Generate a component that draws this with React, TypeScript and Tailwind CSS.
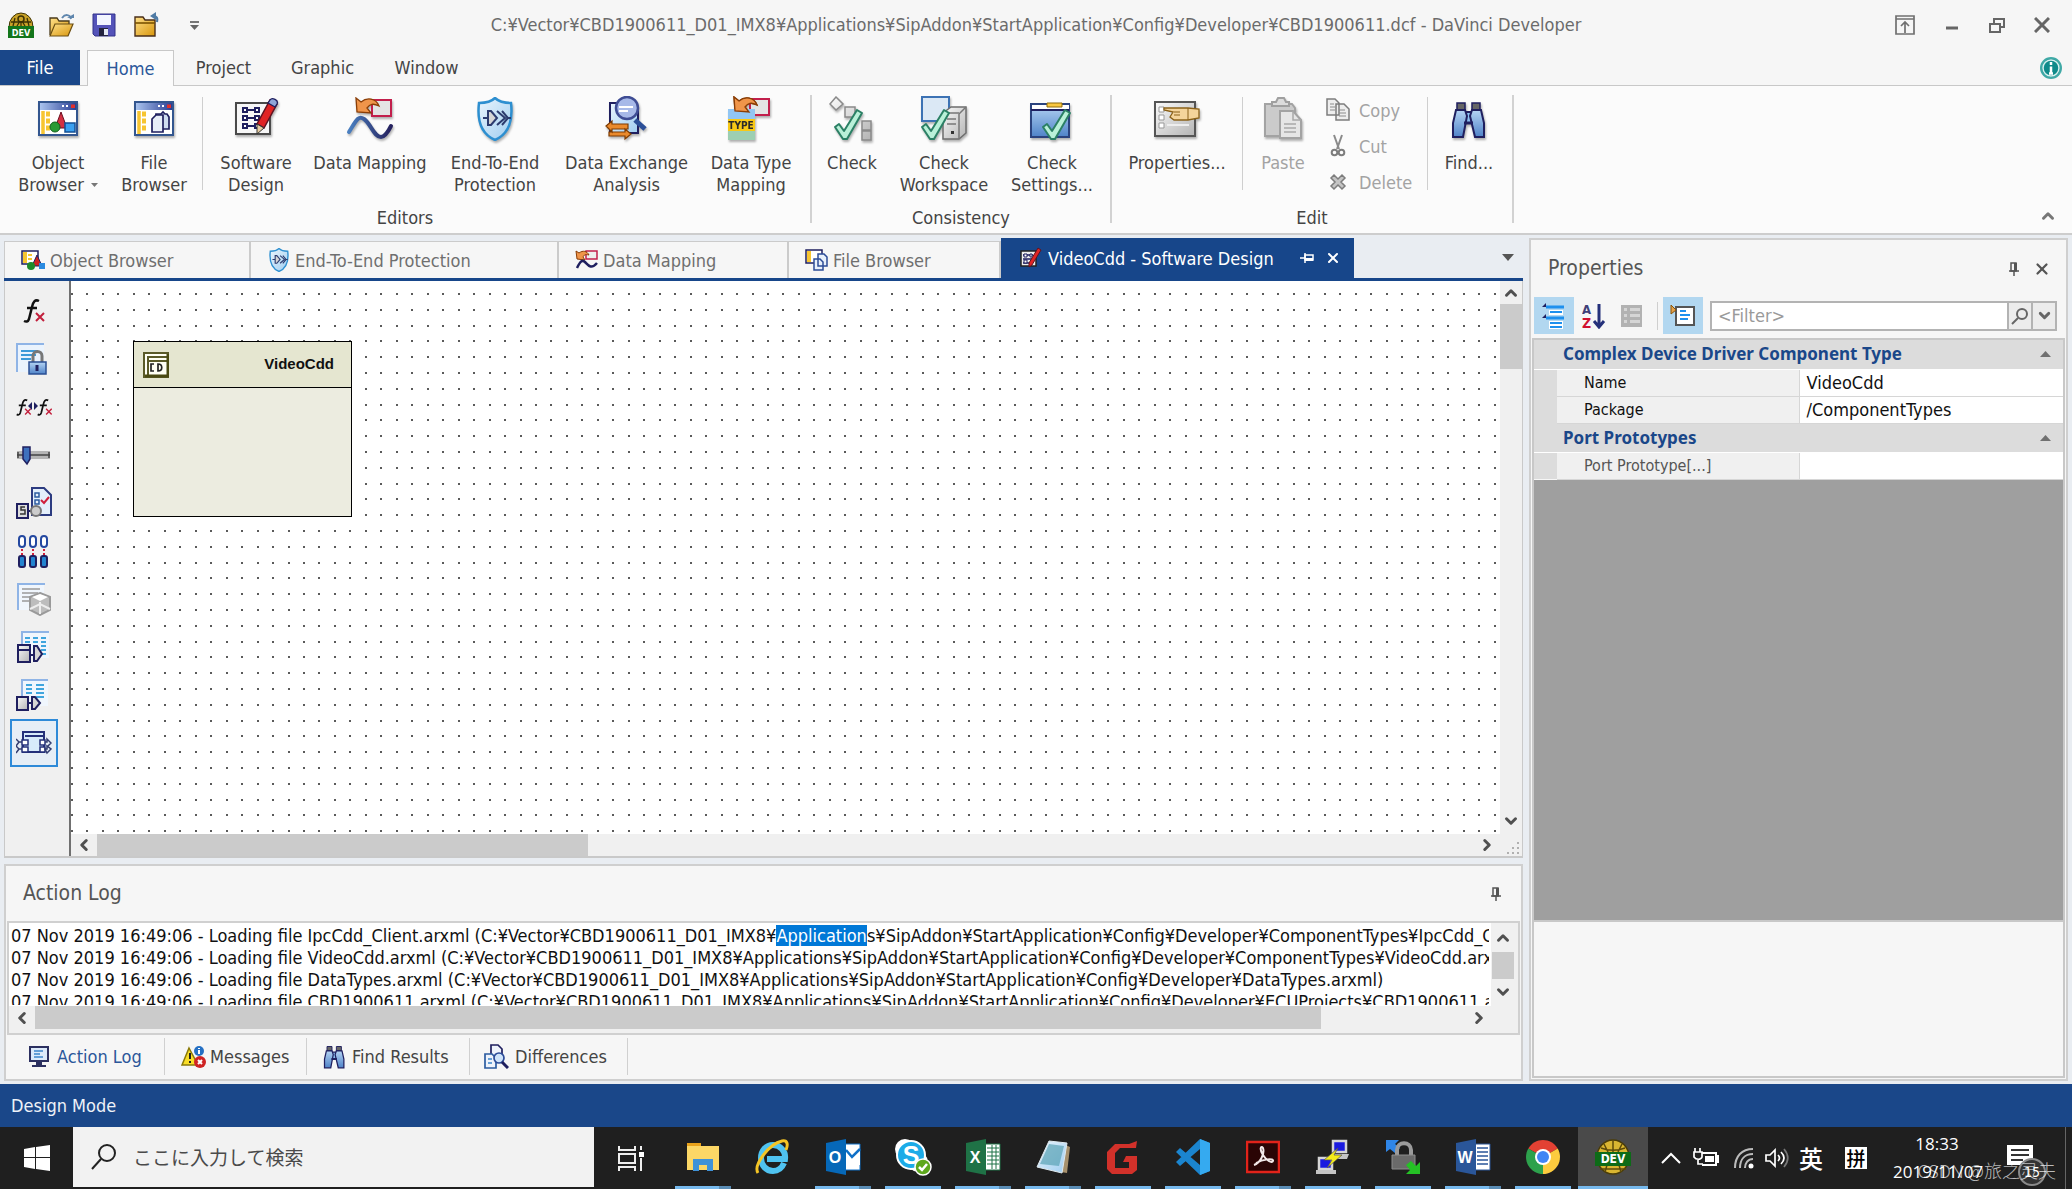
import type { ReactNode } from 'react'
import { ChevronDown, ChevronLeft, ChevronRight, ChevronUp, X } from 'lucide-react'
import clsx from 'clsx'

const NAVY = '#1f1f5f'

interface DrawingProps {
  w: number
  h: number
  box?: string
  children: ReactNode
}

function Drawing({ w, h, box, children }: DrawingProps) {
  return (
    <svg width={w} height={h} viewBox={box ?? `0 0 ${w} ${h}`} fill="none" className="shrink-0" aria-hidden="true">
      {children}
    </svg>
  )
}

function Gradients() {
  return (
    <svg width="0" height="0" className="absolute" aria-hidden="true">
      <defs>
        <linearGradient id="gold" x1="0" y1="0" x2="1" y2="1">
          <stop offset="0" stopColor="#ffe08a" />
          <stop offset="1" stopColor="#d8960c" />
        </linearGradient>
        <linearGradient id="sky" x1="0" y1="0" x2="1" y2="1">
          <stop offset="0" stopColor="#eaf5fd" />
          <stop offset="1" stopColor="#9fcdf0" />
        </linearGradient>
        <linearGradient id="steel" x1="0" y1="0" x2="1" y2="1">
          <stop offset="0" stopColor="#fafafa" />
          <stop offset="1" stopColor="#b4b4b4" />
        </linearGradient>
        <linearGradient id="blue" x1="0" y1="0" x2="0" y2="1">
          <stop offset="0" stopColor="#b5d4f4" />
          <stop offset="1" stopColor="#4f83c8" />
        </linearGradient>
        <linearGradient id="bar" x1="0" y1="0" x2="1" y2="0">
          <stop offset="0" stopColor="#a9c3ee" />
          <stop offset="1" stopColor="#2b3f94" />
        </linearGradient>
        <linearGradient id="wave" x1="0" y1="0" x2="1" y2="0">
          <stop offset="0" stopColor="#4a7fc0" />
          <stop offset="1" stopColor="#25215e" />
        </linearGradient>
      </defs>
    </svg>
  )
}

/* ---------- quick access icons ---------- */

function DevLogo({ size = 26 }: { size?: number }) {
  return (
    <Drawing w={size} h={size} box="0 0 26 26">
      <path d="M1 15a12 14 0 0 1 24 0z" fill="#c9a227" stroke="#3d3205" />
      <circle cx="13" cy="7" r="3" stroke="#3d3205" strokeWidth="1.5" />
      <path d="M3 10h20M7 6l-2 8M19 6l2 8M9 14l3-5M17 14l-3-5M13 9v6" stroke="#3d3205" strokeWidth="1.3" />
      <rect y="14" width="26" height="12" fill="#13761b" />
      <text x="13" y="24" textAnchor="middle" fontFamily="DejaVu Sans Condensed" fontSize="9" fontWeight="700" fill="#fff">DEV</text>
    </Drawing>
  )
}

function OpenFolder() {
  return (
    <Drawing w={27} h={24}>
      <path d="M2 22V5h7l2 3h10v4" fill="url(#gold)" stroke="#4a3a1a" strokeWidth="1.3" />
      <path d="M2 23l5-12h18l-5 12z" fill="url(#gold)" stroke="#6b4e12" strokeWidth="1.2" />
      <path d="M14 5c3-4 8-4 9 1" stroke="#5f86ad" strokeWidth="2" />
      <path d="M19 5h7v-4z" fill="#5f86ad" />
    </Drawing>
  )
}

function SaveIcon() {
  return (
    <Drawing w={24} h={24}>
      <path d="M1 1h22v22H3l-2-2z" fill="#5453b9" stroke="#33338a" />
      <rect x="5" y="2" width="14" height="10" fill="#f2f5ff" />
      <rect x="7" y="15" width="9" height="8" fill="#23233f" />
      <rect x="12" y="16" width="4" height="6" fill="#e4e8f5" />
    </Drawing>
  )
}

function ProjectFolder() {
  return (
    <Drawing w={27} h={26}>
      <path d="M2 24V5h8l2 3h10v16z" fill="url(#gold)" stroke="#4a2f1a" strokeWidth="1.4" />
      <path d="M2 11h20" stroke="#7a5200" strokeWidth="1.6" />
      <path d="M20 4c4 0 5 2 4 6" stroke="#4f7ba5" strokeWidth="2.2" />
      <path d="M17 4l6-4v8z" fill="#4f7ba5" />
    </Drawing>
  )
}

/* ---------- ribbon icons ---------- */

function WindowFrame({ children }: { children: ReactNode }) {
  return (
    <Drawing w={44} h={44}>
      <rect x="3" y="5" width="38" height="33" fill="#fff" stroke="#33568f" strokeWidth="2" />
      <rect x="4" y="6" width="36" height="7" fill="url(#bar)" />
      <path d="M26 9h2M30 9h2" stroke="#fff" strokeWidth="2" />
      <path d="M35 7.5h4v3.500h-4z" fill="#e0302c" />
      <path d="M7 14v23" stroke="#f7c531" strokeWidth="3.500" />
      <path d="M10 17h4M10 24h4M10 31h4" stroke="#f7c531" strokeWidth="5" />
      {children}
    </Drawing>
  )
}

function ObjectBrowserIcon() {
  return (
    <WindowFrame>
      <path d="M25 15l6 16h-12z" fill="#d43142" stroke="#6b1020" />
      <circle cx="19" cy="30" r="5" fill="#2a9a35" stroke="#12601c" />
      <rect x="29" y="26" width="10" height="9" fill="#3aa0f0" stroke="#134f94" strokeWidth="1.5" />
    </WindowFrame>
  )
}

function FileBrowserIcon() {
  return (
    <WindowFrame>
      <path d="M24 20v-3h5l2-2 2 2h2l2 3v12h-6" fill="#cfdcf0" stroke={NAVY} strokeWidth="1.700" />
      <path d="M20 22l4-4h7v17H20z" fill="#e8eef8" stroke={NAVY} strokeWidth="1.700" />
    </WindowFrame>
  )
}

function SoftwareDesignIcon() {
  return (
    <Drawing w={46} h={44}>
      <path d="M3 6h34v31H3z" fill="#f7f7f7" stroke="#4a4a4a" strokeWidth="2" />
      <path d="M13 13h14M13 21h14M13 29h14" stroke={NAVY} strokeWidth="2" />
      <path d="M10 11h4v4h-4zM10 19h4v4h-4zM10 27h4v4h-4zM22 11h4v4h-4zM22 19h4v4h-4zM22 27h4v4h-4z" fill="#fff" stroke={NAVY} strokeWidth="2" />
      <path d="M37 3l7 4-13 24-7-4z" fill="#e02424" stroke="#5f1320" strokeWidth="1.5" />
      <path d="M37 3c2-3 9 0 7 4l-2 3-7-4z" fill="#8fa6d8" stroke={NAVY} strokeWidth="1.3" />
      <path d="M24 27l7 4-7 6z" fill="#e8cda0" stroke="#333" />
    </Drawing>
  )
}

function OrangeArrow() {
  return (
    <>
      <path d="M23 3h19v16H23z" fill="#e4e4e4" stroke="#c21f4c" strokeWidth="2" />
      <path d="M7 1l5 4c6-5 15-4 18 4-6-3-9-2-12 2l4 5-14-1z" fill="#f0954a" stroke="#8a3d05" strokeWidth="1.300" />
    </>
  )
}

function DataMappingIcon() {
  return (
    <Drawing w={48} h={44}>
      <g transform="translate(3 0)"><OrangeArrow /></g>
      <path d="M3 35C10 24 12 18 18 22c7 5 10 18 17 18 4 0 7-5 10-11" stroke="url(#wave)" strokeWidth="4" strokeLinecap="round" />
    </Drawing>
  )
}

function ShieldIcon({ size = 44 }: { size?: number }) {
  return (
    <Drawing w={size} h={size} box="0 0 44 44">
      <path d="M22 1c4 4 9 5 16 5 2 17-2 31-16 37C8 37 4 23 6 6c7 0 12-1 16-5z" fill="url(#sky)" stroke="#2d8fd0" strokeWidth="2.500" />
      <path d="M10 21h5M24 14l8 7-8 7M29 14l6 7-6 7M35 21h3" stroke="#2c3b6e" strokeWidth="2" />
      <path d="M15 14v14h3l6-7-6-7z" fill="#d5d5d5" stroke="#2c3b6e" strokeWidth="2" />
    </Drawing>
  )
}

function DataExchangeIcon() {
  return (
    <Drawing w={46} h={46}>
      <path d="M6 7h19l9 8v22H6z" fill="url(#sky)" stroke={NAVY} strokeWidth="2" />
      <path d="M31 24l10 9" stroke="#2b4f98" strokeWidth="5" />
      <circle cx="23" cy="12" r="11" fill="#a7b9e8" stroke="#3f4d94" strokeWidth="2.500" />
      <path d="M15 11h14M15 15h9" stroke="#fff" strokeWidth="2" />
      <path d="M2 30l6-5v3h16v5H8v3zM27 38l-6-5v3H5v4h16v3z" fill="#ea8a2c" stroke="#7d3b02" strokeWidth="1.200" />
    </Drawing>
  )
}

function DataTypeIcon() {
  return (
    <Drawing w={48} h={46}>
      <OrangeArrow />
      <path d="M1 13h27v11H1z" fill="#92c6f3" />
      <path d="M1 23h27v12H1z" fill="#f8c916" />
      <path d="M1 35h27v9H1z" fill="#9dcfb2" />
      <path d="M7 1l5 4c6-5 15-4 18 4-6-3-9-2-12 2l4 5-14-1z" fill="#f0954a" stroke="#8a3d05" strokeWidth="1.300" />
      <text x="14" y="33" textAnchor="middle" fontFamily="DejaVu Sans Condensed" fontSize="10" fontWeight="700" fill="#2b2b2b">TYPE</text>
    </Drawing>
  )
}

function Tick() {
  return <path d="M3 30l4-3 5 7L25 13l5 3L15 42h-4z" fill="#b9f0d8" stroke="#2b8065" strokeWidth="2" strokeLinejoin="round" />
}

function CheckIcon() {
  return (
    <Drawing w={46} h={46}>
      <path d="M7 1l7 7-7 6-6-6zM16 11h10v10H16zM33 25h9v9h-9zM33 35h9v9h-9z" fill="url(#steel)" stroke="#8a8a8a" strokeWidth="1.500" />
      <g transform="translate(3 1)"><Tick /></g>
    </Drawing>
  )
}

function CheckWorkspaceIcon() {
  return (
    <Drawing w={48} h={46}>
      <path d="M2 1h27v24H2z" fill="#dbe8f5" stroke="#3c72b4" strokeWidth="2" />
      <path d="M23 17l8-6h15v26l-7 6H23z" fill="url(#steel)" stroke="#6e6e6e" strokeWidth="1.500" />
      <path d="M39 18v25M39 18l7-7M23 17h16M27 23h9M27 28h9" stroke="#777" strokeWidth="1.500" />
      <path d="M31 35h3v3h-3z" fill="#333" />
      <g transform="translate(-1 1)"><Tick /></g>
    </Drawing>
  )
}

function CheckSettingsIcon() {
  return (
    <Drawing w={48} h={46}>
      <path d="M3 8h38v33H3z" fill="url(#blue)" stroke="#2b437e" strokeWidth="2" />
      <path d="M4 9h37v4H4z" fill="#fff" />
      <path d="M19 7h15v4H19z" fill="#f9c740" stroke="#8f6b08" />
      <path d="M3 14h38" stroke={NAVY} strokeWidth="2" />
      <g transform="translate(12 1)"><Tick /></g>
    </Drawing>
  )
}

function PropertiesIcon() {
  return (
    <Drawing w={46} h={44}>
      <path d="M1 5h40v34H1z" fill="url(#steel)" stroke="#555" strokeWidth="2" />
      <path d="M5 10h5v5H5zM5 18h5v5H5zM5 26h5v5H5z" fill="#fff" stroke="#999" />
      <path d="M13 28h22" stroke="#eee" strokeWidth="2" />
      <path d="M10 11h24l11 1v9l-11 2H20l-4-3 3-5-9-2z" fill="#f4d49b" stroke="#8a6119" strokeWidth="1.300" />
      <path d="M20 15h6M20 18h6M34 11v12" stroke="#8a6119" />
    </Drawing>
  )
}

function PasteIcon() {
  return (
    <Drawing w={40} h={44}>
      <path d="M2 7h27l3 4v28H2z" fill="#cbcbcb" stroke="#a3a3a3" strokeWidth="2" />
      <path d="M9 9V5h4l2-4h6l2 4h3v4z" fill="#dcdcdc" stroke="#a0a0a0" strokeWidth="2" />
      <path d="M17 14h13l8 9v18H17z" fill="#e6e6e6" stroke="#a3a3a3" strokeWidth="2" />
      <path d="M30 14v9h8M21 27h12M21 31h12M21 35h12" stroke="#a9a9a9" strokeWidth="1.500" />
    </Drawing>
  )
}

function BinocularsIcon({ w = 36, h = 40 }: { w?: number; h?: number }) {
  return (
    <Drawing w={w} h={h} box="0 0 36 40">
      <path d="M6 4h8v7H6zM21 4h8v7h-8z" fill="#666" stroke={NAVY} strokeWidth="1.500" />
      <path d="M13 13h9v11h-9z" fill="#8cc0f2" stroke={NAVY} strokeWidth="2" />
      <path d="M5 11h9l2 6-4 21H2V24zM21 11h9l3 13v14H24l-5-21z" fill="url(#blue)" stroke={NAVY} strokeWidth="2" />
      <path d="M13 24h9" stroke={NAVY} strokeWidth="3" />
    </Drawing>
  )
}

function CopyIcon() {
  return (
    <Drawing w={24} h={24}>
      <path d="M1 1h8l4 4v12H1zM10 6h8l5 5v11H10z" fill="#eee" stroke="#7d7d7d" strokeWidth="1.500" />
      <path d="M4 6h4M4 9h5M4 12h5M13 12h6M13 15h7M13 18h7" stroke="#8c8c8c" />
    </Drawing>
  )
}

function CutIcon() {
  return (
    <Drawing w={24} h={24}>
      <path d="M8 1l5 14M16 1l-5 14" stroke="#8a8a8a" strokeWidth="2" />
      <circle cx="8.500" cy="18.500" r="2.800" stroke="#7d7d7d" strokeWidth="2" />
      <circle cx="15.500" cy="18.500" r="2.800" stroke="#7d7d7d" strokeWidth="2" />
    </Drawing>
  )
}

function DeleteIcon() {
  return (
    <Drawing w={24} h={24}>
      <path d="M8 5l4 4 4-4 3 3-4 4 4 4-3 3-4-4-4 4-3-3 4-4-4-4z" fill="#c4c4c4" stroke="#7d7d7d" strokeWidth="1.500" />
    </Drawing>
  )
}

/* ---------- document tab icons ---------- */

function ObjectTabIcon() {
  return (
    <Drawing w={25} h={22}>
      <path d="M1 2h16v13H1z" fill="#fff" stroke={NAVY} strokeWidth="1.500" />
      <path d="M2 3h4v11H2zM7 5h4v2H7zM7 9h4v2H7z" fill="#f7c531" />
      <path d="M16 6l5 11H11z" fill="#c22" stroke={NAVY} />
      <circle cx="10" cy="17" r="4" fill="#1d8a2b" />
      <path d="M18 14h6v6h-6z" fill="#2a8ae0" />
    </Drawing>
  )
}

function MappingTabIcon() {
  return (
    <Drawing w={24} h={22}>
      <path d="M11 2h11v8H11z" fill="#eee" stroke="#c21f4c" strokeWidth="1.500" />
      <path d="M1 2l3 2c4-3 8-2 10 2-4-1-5 0-6 2l2 3-8-1z" fill="#f0954a" stroke="#8a3d05" />
      <path d="M2 19c3-6 5-9 8-6s6 8 12 1" stroke={NAVY} strokeWidth="2.500" />
    </Drawing>
  )
}

function FileTabIcon() {
  return (
    <Drawing w={24} h={24}>
      <path d="M1 2h16v13H1z" fill="#fff" stroke={NAVY} strokeWidth="1.500" />
      <path d="M2 3h4v11H2z" fill="#f7c531" />
      <path d="M13 6h6l3 3v9h-9zM9 11h6l3 3v8H9z" fill="#e8f0fb" stroke="#2c4c98" strokeWidth="1.500" />
    </Drawing>
  )
}

function DesignTabIcon() {
  return (
    <Drawing w={22} h={22}>
      <path d="M1 4h15v15H1z" fill="#eee" stroke="#222" strokeWidth="1.500" />
      <path d="M3 8h10M3 12h9M3 16h9" stroke={NAVY} strokeWidth="1.500" />
      <path d="M4 7h3v3H4zM4 13h3v3H4zM10 7h2v3h-2z" fill="#fff" stroke={NAVY} />
      <path d="M18 1l3 2-9 15-3 2v-4z" fill="#e02424" stroke="#5f1320" />
    </Drawing>
  )
}

function PinIcon({ sideways }: { sideways?: boolean }) {
  return (
    <Drawing w={14} h={14}>
      <g transform={sideways ? 'rotate(90 7 7)' : undefined} stroke="currentColor">
        <path d="M4 1h5v8H4z" strokeWidth="1.500" />
        <path d="M8.500 1v8" strokeWidth="3" />
        <path d="M2 9h10M7 9v5" strokeWidth="1.500" />
      </g>
    </Drawing>
  )
}

/* ---------- palette icons ---------- */

function Fx({ x, y, s }: { x: number; y: number; s: number }) {
  return (
    <g transform={`translate(${x} ${y}) scale(${s})`}>
      <path d="M16 2c-4-2-6 1-7 6L6 20c-1 3-3 3-5 2M4 9h10" stroke="#111" strokeWidth="2.500" />
      <path d="M13 14l8 8M21 14l-8 8" stroke="#c21f3c" strokeWidth="2" />
    </g>
  )
}

function Sheet() {
  return <path d="M2 28V2h27" stroke="#8fb4e6" strokeWidth="2" />
}

const PALETTE: { name: string; icon: ReactNode; active?: boolean }[] = [
  { name: 'Runnables', icon: <Fx x={7} y={5} s={1} /> },
  {
    name: 'Exclusive areas',
    icon: (
      <>
        <path d="M1 30V2h27v28z" fill="#eaf3fd" />
        <path d="M1 30V2h27" stroke="#8fb4e6" strokeWidth="2" />
        <path d="M5 9h17M5 13h15M5 17h10" stroke="#3d9ad8" strokeWidth="2" />
        <path d="M17 20v-6c0-6 9-6 9 0v6" stroke="#777" strokeWidth="3" />
        <path d="M13 20h17v12H13z" fill="url(#blue)" stroke="#2a4f94" strokeWidth="1.500" />
        <path d="M21 23v6" stroke={NAVY} strokeWidth="3" />
      </>
    ),
  },
  {
    name: 'Inter-runnable variables',
    icon: (
      <>
        <Fx x={0} y={9} s={0.7} />
        <Fx x={21} y={9} s={0.7} />
        <path d="M16 12v8l-4-4zM18 12v8l4-4z" fill={NAVY} />
      </>
    ),
  },
  {
    name: 'Calibration',
    icon: (
      <>
        <path d="M1 13h33v8H1z" fill="#b5b5b5" />
        <path d="M1 17h33M2 14v6M33 14v6" stroke="#444" strokeWidth="1.500" />
        <path d="M7 9h7v12l-3 5-4-5z" fill="#3e70bd" stroke={NAVY} strokeWidth="1.500" />
      </>
    ),
  },
  {
    name: 'Service needs',
    icon: (
      <>
        <path d="M16 2h12l7 7v20H16z" fill="#e4effb" stroke="#2c3b80" strokeWidth="2" />
        <path d="M19 7h4v4h-4zM19 14h4v4h-4z" stroke="#2c5ca0" strokeWidth="1.500" />
        <path d="M25 14l3 3 5-6" stroke="#d0203c" strokeWidth="2" />
        <path d="M1 18h11v14H1z" fill="#ddd" stroke={NAVY} strokeWidth="2" />
        <path d="M9 21H5v3h4v4H4" stroke="#333" strokeWidth="1.500" />
        <path d="M12 25h4" stroke={NAVY} strokeWidth="2" />
        <circle cx="20" cy="25" r="5" fill="#ccc" stroke="#777" strokeWidth="2" />
      </>
    ),
  },
  {
    name: 'Per-instance memory',
    icon: [6, 17, 28].map((x) => (
      <g key={x}>
        <rect x={x - 3} y="2" width="6" height="11" rx="3" fill="#fff" stroke="#2448a0" strokeWidth="2" />
        <path d={`M${x} 15v7`} stroke="#d0203c" strokeWidth="2" strokeDasharray="2 2" />
        <rect x={x - 3} y="22" width="6" height="11" rx="2" fill="#2384d0" stroke={NAVY} strokeWidth="2" />
      </g>
    )),
  },
  {
    name: 'Data elements',
    icon: (
      <>
        <path d="M2 2h26v26H2z" fill="#f0f6fd" />
        <Sheet />
        <path d="M6 7h18M6 11h16M6 15h10M6 19h8" stroke="#999" strokeWidth="1.500" />
        <path d="M24 11l10 4v13l-10 5-10-5V15z" fill="#bdbdbd" stroke="#9a9a9a" strokeWidth="2" />
        <path d="M24 12l8 3-8 4-8-4z" fill="#fff" />
        <path d="M24 20v12M14 27l10-5 10 5" stroke="#eee" strokeWidth="2" />
      </>
    ),
  },
  {
    name: 'Port access table',
    icon: (
      <>
        <path d="M6 2h27v26H6z" fill="#f0f6fd" />
        <path d="M6 28V2h27" stroke="#8fb4e6" strokeWidth="2" />
        <path d="M9 8h5M17 8h5M25 8h5M9 12h5M17 12h5M25 12h5M17 16h5M25 16h5M25 20h5M25 24h5" stroke="#3fa5de" strokeWidth="2" />
        <path d="M2 15h12v17H2zM2 20h12" fill="url(#steel)" stroke={NAVY} strokeWidth="2" />
        <path d="M14 25h4M18 16h3l5 8-5 7h-3z" fill="#d5d5d5" stroke={NAVY} strokeWidth="2" />
      </>
    ),
  },
  {
    name: 'Port defaults',
    icon: (
      <>
        <path d="M6 2h26v26H6z" fill="#f0f6fd" />
        <path d="M6 28V2h26" stroke="#8fb4e6" strokeWidth="2" />
        <path d="M10 7h6M20 7h8M10 11h6M20 11h8M10 15h6M20 15h8M20 19h8" stroke="#3fa5de" strokeWidth="2" />
        <path d="M1 19h11v13H1z" fill="url(#steel)" stroke={NAVY} strokeWidth="2" />
        <path d="M12 25h4M16 19h3l5 6-5 6h-3z" fill="#d5d5d5" stroke={NAVY} strokeWidth="2" />
      </>
    ),
  },
  {
    name: 'Component view',
    active: true,
    icon: (
      <>
        <path d="M7 6h21v20H7z" fill="#d7ebfb" stroke="#24307a" strokeWidth="2" />
        <path d="M9 10h18" stroke="#24307a" strokeWidth="2" />
        <path d="M6 14h6v5H6zM6 21h6v5H6zM24 14h5v5h-5zM24 21h5v5h-5z" fill="#fff" stroke="#24307a" strokeWidth="1.500" />
        <path d="M0 13l3 3-3 4M0 20l3 3-3 4M3 16h3M3 23h3M29 16h2v-3l4 4-4 4M29 23h2v-3l4 3-4 4z" stroke="#333d70" strokeWidth="1.500" />
      </>
    ),
  },
]

/* ---------- chrome ---------- */

function TitleBar() {
  return (
    <header className="grid h-[50px] shrink-0 grid-cols-[1fr_auto_1fr] items-center text-[#6b6b6b]">
      <div className="flex items-center pl-2">
        <button aria-label="DaVinci Developer" className="mr-[14px]"><DevLogo /></button>
        <button aria-label="Open" className="mr-[17px]"><OpenFolder /></button>
        <button aria-label="Save" className="mr-[17px]"><SaveIcon /></button>
        <button aria-label="Open project" className="mr-[30px]"><ProjectFolder /></button>
        <button aria-label="Customize quick access">
          <Drawing w={9} h={9}>
            <path d="M0 1h9" stroke="#777" strokeWidth="2" />
            <path d="M0 4h9L4.500 9z" fill="#666" />
          </Drawing>
        </button>
      </div>
      <h1 className="text-[18px] leading-6 whitespace-nowrap">
        C:¥Vector¥CBD1900611_D01_IMX8¥Applications¥SipAddon¥StartApplication¥Config¥Developer¥CBD1900611.dcf - DaVinci Developer
      </h1>
      <div className="flex items-center justify-end gap-[29px] pr-[22px]">
        <button aria-label="Ribbon display options">
          <Drawing w={20} h={20}>
            <path d="M1 1h18v18H1zM1 4h18M10 18V7M6 11l4-4 4 4" stroke="#707070" strokeWidth="1.700" />
          </Drawing>
        </button>
        <button aria-label="Minimize">
          <Drawing w={16} h={16}><path d="M2 11h12" stroke="#666" strokeWidth="3" /></Drawing>
        </button>
        <button aria-label="Restore">
          <Drawing w={16} h={16}>
            <path d="M1 7h10v8H1zM1 7h10M5 6V2h10v8h-3" stroke="#666" strokeWidth="2" />
          </Drawing>
        </button>
        <button aria-label="Close">
          <Drawing w={16} h={16}><path d="M1 1l14 14M15 1L1 15" stroke="#666" strokeWidth="3" /></Drawing>
        </button>
      </div>
    </header>
  )
}

function RibbonTabs() {
  return (
    <nav className="flex h-9 shrink-0 items-stretch border-b border-[#c8c8c8] text-[18px] text-[#444]">
      <button className="mr-[7px] w-20 bg-[#1a4789] text-white">File</button>
      <button className="-mb-px w-[87px] border border-b-0 border-[#c8c8c8] bg-[#fbfbfb] text-[#2b579a]">Home</button>
      <button className="w-[99px]">Project</button>
      <button className="w-[99px]">Graphic</button>
      <button className="w-[109px]">Window</button>
      <button aria-label="About" className="mr-[10px] ml-auto">
        <Drawing w={22} h={22}>
          <circle cx="11" cy="11" r="10" fill="#0f8a8a" stroke="#3fa9a6" strokeWidth="2" />
          <circle cx="11" cy="11" r="8" stroke="#d8f0ee" strokeWidth="1.500" />
          <path d="M11 5v3M11 9.500v7M9 16.500h4" stroke="#fff" strokeWidth="2.500" />
        </Drawing>
      </button>
    </nav>
  )
}

interface RibbonButtonProps {
  icon: ReactNode
  lines: string[]
  width: string
  menu?: boolean
  disabled?: boolean
}

function RibbonButton({ icon, lines, width, menu, disabled }: RibbonButtonProps) {
  return (
    <button disabled={disabled} className={clsx('flex h-full shrink-0 flex-col items-center leading-[22px]', width, disabled && 'text-[#a3a3a3]')}>
      <span className="mb-[9px] flex h-12 items-center drop-shadow-[1px_2px_1px_rgba(0,0,0,0.3)]">{icon}</span>
      {lines.map((line, i) => (
        <span key={line} className="flex items-center whitespace-nowrap">
          {line}
          {menu && i === lines.length - 1 && (
            <span className="ml-[7px]"><Drawing w={7} h={4}><path d="M0 0h7L3.500 4z" fill="#777" /></Drawing></span>
          )}
        </span>
      ))}
    </button>
  )
}

function RibbonGroup({ label, children }: { label: string; children: ReactNode }) {
  return (
    <section className="flex h-[128px] shrink-0 flex-col border-r-2 border-[#d2d2d2]">
      <div className="flex h-[112px] shrink-0 pr-[2px]">{children}</div>
      <h2 className="text-center leading-[22px]">{label}</h2>
    </section>
  )
}

function Divider() {
  return <span className="mt-[2px] h-[93px] w-px shrink-0 bg-[#cfcfcf]" />
}

function Ribbon() {
  return (
    <div className="flex h-[149px] shrink-0 items-start border-b-2 border-[#cdcdcd] bg-[#fbfbfb] pt-[9px] text-[18px] text-[#444]">
      <RibbonGroup label="Editors">
        <span className="w-[10px]" />
        <RibbonButton icon={<ObjectBrowserIcon />} lines={['Object', 'Browser']} width="w-24" menu />
        <RibbonButton icon={<FileBrowserIcon />} lines={['File', 'Browser']} width="w-24" />
        <Divider />
        <RibbonButton icon={<SoftwareDesignIcon />} lines={['Software', 'Design']} width="w-[106px]" />
        <RibbonButton icon={<DataMappingIcon />} lines={['Data Mapping']} width="w-[122px]" />
        <RibbonButton icon={<ShieldIcon />} lines={['End-To-End', 'Protection']} width="w-32" />
        <RibbonButton icon={<DataExchangeIcon />} lines={['Data Exchange', 'Analysis']} width="w-[135px]" />
        <RibbonButton icon={<DataTypeIcon />} lines={['Data Type', 'Mapping']} width="w-[114px]" />
      </RibbonGroup>
      <RibbonGroup label="Consistency">
        <RibbonButton icon={<CheckIcon />} lines={['Check']} width="w-20" />
        <RibbonButton icon={<CheckWorkspaceIcon />} lines={['Check', 'Workspace']} width="w-[104px]" />
        <RibbonButton icon={<CheckSettingsIcon />} lines={['Check', 'Settings...']} width="w-28" />
      </RibbonGroup>
      <RibbonGroup label="Edit">
        <RibbonButton icon={<PropertiesIcon />} lines={['Properties...']} width="w-[130px]" />
        <Divider />
        <RibbonButton icon={<PasteIcon />} lines={['Paste']} width="w-20" disabled />
        <div className="flex w-[104px] flex-col text-[#a3a3a3]">
          <button disabled className="flex h-9 items-center gap-[9px] pb-[6px] pl-[3px]"><CopyIcon />Copy</button>
          <button disabled className="flex h-9 items-center gap-[9px] pb-[6px] pl-[3px]"><CutIcon />Cut</button>
          <button disabled className="flex h-9 items-center gap-[9px] pb-[6px] pl-[3px]"><DeleteIcon />Delete</button>
        </div>
        <Divider />
        <RibbonButton icon={<BinocularsIcon />} lines={['Find...']} width="w-[82px]" />
      </RibbonGroup>
      <button aria-label="Collapse ribbon" className="mt-auto mr-[15px] mb-[8px] ml-auto text-[#777]">
        <ChevronUp size={18} strokeWidth={4} />
      </button>
    </div>
  )
}

interface DocTabProps {
  icon: ReactNode
  label: string
  width: string
}

function DocTab({ icon, label, width }: DocTabProps) {
  return (
    <button className={clsx('flex h-[37px] shrink-0 items-center gap-1 border-t border-r-2 border-[#cbcbcb] bg-[#f6f6f6] pl-4 text-[#6f6f6f]', width)}>
      {icon}
      {label}
    </button>
  )
}

function DocTabs() {
  return (
    <div className="flex h-[43px] shrink-0 items-end border-b-[3px] border-[#17468a] text-[18px]">
      <div className="flex border-l border-[#cbcbcb]">
        <DocTab icon={<ObjectTabIcon />} label="Object Browser" width="w-[246px]" />
        <DocTab icon={<ShieldIcon size={24} />} label="End-To-End Protection" width="w-[308px]" />
        <DocTab icon={<MappingTabIcon />} label="Data Mapping" width="w-[230px]" />
        <DocTab icon={<FileTabIcon />} label="File Browser" width="w-[212px]" />
      </div>
      <div className="flex h-10 w-[353px] items-center bg-[#17468a] pl-[19px] text-white">
        <button className="flex items-center gap-[6px]">
          <DesignTabIcon />
          VideoCdd - Software Design
        </button>
        <button aria-label="Pin tab" className="ml-[26px]"><PinIcon sideways /></button>
        <button aria-label="Close tab" className="ml-[11px]"><X size={16} strokeWidth={3} /></button>
      </div>
      <button aria-label="Open tab list" className="mr-[9px] mb-[17px] ml-auto">
        <Drawing w={12} h={7}><path d="M0 0h12L6 7z" fill="#555" /></Drawing>
      </button>
    </div>
  )
}

const GRID_PATH = Array.from({ length: 35 }, (_, row) =>
  Array.from({ length: 93 }, (_, col) => `M${Math.round(col * 15.466)} ${Math.round(12 + row * 15.8)}h2v2h-2z`).join(''),
).join('')

function DesignCanvas() {
  return (
    <div className="relative min-h-0 min-w-0 flex-1 overflow-hidden bg-white">
      <svg width="100%" height="100%" className="block" aria-hidden="true">
        <path d={GRID_PATH} fill="#5a5a5a" />
      </svg>
      <div className="absolute top-[60px] left-[62px] h-[176px] w-[219px] border border-black bg-[#ecece0]">
        <div className="flex h-[46px] items-center justify-between border-b border-black bg-[#e5e6d0] pr-[17px] pl-[9px]">
          <Drawing w={26} h={26}>
            <path d="M1 1h24v24H1z" fill="#fffff4" stroke="#5a5a28" strokeWidth="2" />
            <path d="M5 25V5h20M5 9h20" stroke="#5a5a28" strokeWidth="2" />
            <path d="M2 24h23V2" stroke="#4a4a12" strokeWidth="3" />
            <path d="M11 12H8v7h3M15 12v7c5 0 5-7 0-7z" stroke="#222" strokeWidth="1.700" />
          </Drawing>
          <span className="font-['Liberation_Sans',Arial,sans-serif] text-[15px] font-bold text-[#111]">VideoCdd</span>
        </div>
      </div>
    </div>
  )
}

function Editor() {
  return (
    <div className="flex min-h-0 flex-1 border-x border-b-2 border-[#c9c9c9] bg-[#f0f0f0]">
      <div className="flex w-16 shrink-0 flex-col items-start pt-[6px] pl-[5px]">
        {PALETTE.map((tool) => (
          <button
            key={tool.name}
            aria-label={tool.name}
            className={clsx('flex h-12 w-12 items-center justify-center', tool.active && 'border-2 border-[#2e8ad8] bg-[#e6eef6]')}
          >
            <Drawing w={36} h={34}>{tool.icon}</Drawing>
          </button>
        ))}
      </div>
      <div className="flex min-w-0 flex-1 flex-col border-l-2 border-[#707070]">
        <div className="flex min-h-0 flex-1">
          <DesignCanvas />
          <div className="flex w-[22px] shrink-0 flex-col items-center text-[#505050]">
            <button aria-label="Scroll up" className="flex h-[23px] items-center"><ChevronUp size={18} strokeWidth={4} /></button>
            <span className="h-[65px] w-full bg-[#cbcbcb]" />
            <button aria-label="Scroll down" className="mt-auto mb-1"><ChevronDown size={18} strokeWidth={4} /></button>
          </div>
        </div>
        <div className="flex h-[22px] shrink-0 items-center text-[#505050]">
          <button aria-label="Scroll left" className="flex w-[26px] justify-center"><ChevronLeft size={18} strokeWidth={4} /></button>
          <span className="h-full w-[491px] bg-[#cbcbcb]" />
          <button aria-label="Scroll right" className="mr-[10px] ml-auto"><ChevronRight size={18} strokeWidth={4} /></button>
          <span className="mt-2 mr-[2px]">
            <Drawing w={14} h={14}>
              <path d="M11 0h2v2h-2zM11 5h2v2h-2zM6 5h2v2H6zM11 10h2v2h-2zM6 10h2v2H6zM1 10h2v2H1z" fill="#b0b0b0" />
            </Drawing>
          </span>
        </div>
      </div>
    </div>
  )
}

const ROOT = 'C:¥Vector¥CBD1900611_D01_IMX8¥'
const CONFIG = '¥SipAddon¥StartApplication¥Config¥Developer¥'

const LOG = [
  { file: 'VideoCdd.arxml', path: 'ComponentTypes¥VideoCdd.arxml' },
  { file: 'DataTypes.arxml', path: 'DataTypes.arxml' },
  { file: 'CBD1900611.arxml', path: 'ECUProjects¥CBD1900611.arxml' },
]

function ActionLogTabs() {
  const tab = 'flex h-[37px] items-center border-r border-[#d0d0d0]'
  return (
    <div className="flex items-center pt-[3px] pl-[2px] text-[18px] text-[#444]">
      <button className={clsx(tab, 'w-[157px] gap-2 pl-[21px] text-[#2b579a]')}>
        <Drawing w={20} h={22}>
          <path d="M1 1h18v14H1z" fill="#dceafa" stroke="#2c3060" strokeWidth="2" />
          <path d="M5 5h9M5 8h6M5 11h9" stroke="#3d86cc" strokeWidth="1.500" />
          <path d="M8 15h4v4H8zM3 20h14" fill="#2c3060" stroke="#2c3060" strokeWidth="2" />
        </Drawing>
        Action Log
      </button>
      <button className={clsx(tab, 'w-[142px] gap-1 pl-4')}>
        <Drawing w={25} h={24}>
          <path d="M8 3l9 17H1z" fill="#f9dd28" stroke="#8a7a08" strokeWidth="1.500" />
          <path d="M9 8v6M9 16v2" stroke="#222" strokeWidth="2" />
          <circle cx="18" cy="6" r="5" fill="#2570c4" />
          <path d="M18 3v1M18 5v4" stroke="#fff" strokeWidth="2" />
          <circle cx="19" cy="17" r="6" fill="#cf2424" />
          <path d="M17 15l4 4M21 15l-4 4" stroke="#fff" strokeWidth="2" />
        </Drawing>
        Messages
      </button>
      <button className={clsx(tab, 'w-[163px] gap-[6px] pl-4')}>
        <BinocularsIcon w={23} h={25} />
        Find Results
      </button>
      <button className={clsx(tab, 'w-[158px] gap-[6px] pl-[14px]')}>
        <Drawing w={25} h={25}>
          <path d="M7 1h7l4 4v13H7z" fill="#eef3fb" stroke={NAVY} strokeWidth="1.700" />
          <path d="M1 10h7l4 4v10H1z" fill="#eef3fb" stroke="#2c5ca0" strokeWidth="1.700" />
          <path d="M4 15h4M4 19h4" stroke="#3d86cc" strokeWidth="1.500" />
          <circle cx="15" cy="14" r="5" fill="#cfe4fa" stroke="#2c4c98" strokeWidth="1.700" />
          <path d="M18 18l6 6" stroke={NAVY} strokeWidth="3" />
        </Drawing>
        Differences
      </button>
    </div>
  )
}

function ActionLog() {
  return (
    <section className="mt-[6px] flex h-[217px] shrink-0 flex-col border-2 border-[#cfcfcf] bg-[#f6f6f6]">
      <div className="flex h-[55px] shrink-0 items-center justify-between pr-[18px] pl-[17px] text-[#555]">
        <h2 className="text-[21px]">Action Log</h2>
        <button aria-label="Pin Action Log"><PinIcon /></button>
      </div>
      <div className="mx-px border-2 border-[#d0d0d0] bg-[#f0f0f0]">
        <div className="flex h-[83px] bg-white">
          <div className="mt-[2px] h-20 min-w-0 flex-1 overflow-hidden pl-[2px] text-[18px] leading-[22px] whitespace-nowrap text-[#111]">
            <p>
              07 Nov 2019 16:49:06 - Loading file IpcCdd_Client.arxml ({ROOT}
              <span className="bg-[#0078d7] text-white">Application</span>s{CONFIG}ComponentTypes¥IpcCdd_Client.arxml)
            </p>
            {LOG.map((entry) => (
              <p key={entry.file}>
                07 Nov 2019 16:49:06 - Loading file {entry.file} ({ROOT}Applications{CONFIG}{entry.path})
              </p>
            ))}
          </div>
          <div className="ml-[2px] flex w-[27px] shrink-0 flex-col items-center bg-[#f0f0f0] pr-1 text-[#505050]">
            <button aria-label="Scroll log up" className="flex h-[29px] items-center"><ChevronUp size={18} strokeWidth={4} /></button>
            <span className="h-[27px] w-[22px] bg-[#cbcbcb]" />
            <button aria-label="Scroll log down" className="mt-1"><ChevronDown size={18} strokeWidth={4} /></button>
          </div>
        </div>
        <div className="mb-1 flex h-[23px] items-center text-[#505050]">
          <button aria-label="Scroll log left" className="flex w-[26px] justify-center"><ChevronLeft size={18} strokeWidth={4} /></button>
          <span className="h-full w-[1286px] bg-[#cbcbcb]" />
          <button aria-label="Scroll log right" className="mr-[30px] ml-auto"><ChevronRight size={18} strokeWidth={4} /></button>
        </div>
      </div>
      <ActionLogTabs />
    </section>
  )
}

/* ---------- properties panel ---------- */

function CategoryRow({ label }: { label: string }) {
  return (
    <tr className="h-[29px] bg-[#dcdcdc]">
      <th colSpan={3} scope="colgroup" className="border-b border-white p-0">
        <span className="flex items-center justify-between pr-3 pl-[29px] font-['Noto_Sans','Open_Sans',sans-serif] text-[17px] leading-[26px] font-bold text-[#1a4789]">
          {label}
          <Drawing w={11} h={6}><path d="M0 6h11L5.500 0z" fill="#707070" /></Drawing>
        </span>
      </th>
    </tr>
  )
}

function PropertyRow({ name, value, muted }: { name: string; value: string; muted?: boolean }) {
  return (
    <tr className="h-[27px]">
      <td className="w-[23px] bg-[#dcdcdc] p-0" />
      <th
        scope="row"
        className={clsx('w-[242px] border-r border-b border-[#d6d6d6] bg-[#f0f0f0] p-0 pl-[27px] text-left text-[16px] leading-6 font-normal', muted ? 'text-[#555]' : 'text-[#111]')}
      >
        {name}
      </th>
      <td className="border-b border-[#d6d6d6] bg-white p-0 pl-[7px] text-[18px] leading-6 text-[#111]">{value}</td>
    </tr>
  )
}

function PropertiesPanel() {
  return (
    <aside className="mt-[3px] ml-[6px] flex w-[539px] shrink-0 flex-col border-2 border-[#cfcfcf] bg-[#f6f6f6]">
      <div className="flex h-[57px] shrink-0 items-center pr-[15px] pl-[17px] text-[#555]">
        <h2 className="mr-auto text-[21px]">Properties</h2>
        <button aria-label="Pin Properties" className="mr-3"><PinIcon /></button>
        <button aria-label="Close Properties"><X size={18} strokeWidth={3} /></button>
      </div>
      <div className="flex h-[37px] shrink-0 items-center pr-[9px] pl-[3px]">
        <button aria-label="Categorized" className="flex h-full w-10 items-center justify-center bg-[#b2d7f0]">
          <Drawing w={24} h={26}>
            <path d="M4 4h18M4 15h18" stroke="#1d90ee" strokeWidth="3" />
            <path d="M7 7h14v5H7zM7 18h14v8H7z" fill="#fff" />
            <path d="M8 9h12M8 20h12M8 24h12" stroke="#1d90ee" strokeWidth="2" />
            <path d="M0 4l4-4v4zM0 15l4-4v4z" fill={NAVY} />
          </Drawing>
        </button>
        <button aria-label="Alphabetical" className="ml-2">
          <Drawing w={24} h={26}>
            <text x="0" y="11" fontFamily="DejaVu Sans Condensed" fontSize="13" fontWeight="700" fill="#404078">A</text>
            <text x="0" y="25" fontFamily="DejaVu Sans Condensed" fontSize="14" fontWeight="700" fill="#d01030">Z</text>
            <path d="M17 1v22M12 18l5 6 5-6" stroke="#24307a" strokeWidth="3" />
          </Drawing>
        </button>
        <button aria-label="Property pages" disabled className="ml-[15px]">
          <Drawing w={21} h={22}>
            <path d="M0 0h21v22H0z" fill="#b2b2b2" />
            <path d="M3 3h3v3H3zM3 9h3v3H3zM3 15h3v3H3zM9 3h10v3H9zM9 9h10v3H9zM9 15h10v3H9z" fill="#d5d5d5" />
          </Drawing>
        </button>
        <span className="mr-[5px] ml-[15px] h-7 w-px bg-[#cfcfcf]" />
        <button aria-label="Show description" className="mr-[7px] flex h-full w-10 items-center justify-center bg-[#b2d7f0]">
          <Drawing w={26} h={24}>
            <path d="M6 3h18v18H6z" fill="#fff" stroke="#555" strokeWidth="2" />
            <path d="M10 7h6M10 11h10M10 15h8" stroke="#1d90ee" strokeWidth="2" />
            <path d="M1 1l5 5-5 4z" fill="#e3a04b" stroke="#8a5508" />
          </Drawing>
        </button>
        <div className="flex h-[30px] min-w-0 flex-1 border-2 border-[#b3b3b3] bg-white">
          <input aria-label="Filter properties" placeholder="<Filter>" className="min-w-0 flex-1 px-[6px] text-[18px] outline-none placeholder:text-[#9a9a9a]" />
          <button aria-label="Search" className="flex w-6 items-center justify-center border-l-2 border-[#b3b3b3] bg-[#ececec]">
            <Drawing w={18} h={18}>
              <circle cx="11" cy="7" r="5" stroke="#666" strokeWidth="2" />
              <path d="M7 11l-6 6" stroke="#666" strokeWidth="2" />
            </Drawing>
          </button>
          <button aria-label="Filter history" className="flex w-6 items-center justify-center border-l-2 border-[#b3b3b3] bg-[#ececec] text-[#666]">
            <ChevronDown size={17} strokeWidth={4} />
          </button>
        </div>
      </div>
      <div className="mx-px mt-1 mb-px flex min-h-0 flex-1 flex-col border-2 border-[#c8c8c8]">
        <table className="w-full table-fixed border-collapse">
          <colgroup>
            <col className="w-[23px]" />
            <col className="w-[242px]" />
            <col />
          </colgroup>
          <tbody>
            <CategoryRow label="Complex Device Driver Component Type" />
            <PropertyRow name="Name" value="VideoCdd" />
            <PropertyRow name="Package" value="/ComponentTypes" />
            <CategoryRow label="Port Prototypes" />
            <PropertyRow name="Port Prototype[...]" value="" muted />
          </tbody>
        </table>
        <div className="min-h-0 flex-1 bg-[#9f9f9f]" />
        <div className="h-[156px] shrink-0 border-t-2 border-[#c8c8c8] bg-[#f6f6f6]" />
      </div>
    </aside>
  )
}

/* ---------- task bar ---------- */

function OfficeIcon({ letter, color, dark, children }: { letter: string; color: string; dark: string; children: ReactNode }) {
  return (
    <Drawing w={36} h={36}>
      <path d="M18 5h17v26H18z" fill="#fff" stroke={color} />
      {children}
      <path d="M1 4l20-4v36L1 32z" fill={dark} />
      <text x="10" y="24" textAnchor="middle" fontFamily="Liberation Sans" fontSize="16" fontWeight="700" fill="#fff">{letter}</text>
    </Drawing>
  )
}

const APPS: { name: string; icon: ReactNode; state: 'none' | 'open' | 'stack' | 'active' }[] = [
  {
    name: 'File Explorer',
    state: 'stack',
    icon: (
      <Drawing w={34} h={34}>
        <path d="M1 3h14v6H1z" fill="#e9a21b" />
        <path d="M1 6h32v24H1z" fill="#fcd766" />
        <path d="M7 31V19h20v12h-6v-6h-8v6z" fill="#3f92d8" />
      </Drawing>
    ),
  },
  {
    name: 'Internet Explorer',
    state: 'none',
    icon: (
      <Drawing w={36} h={36}>
        <path d="M29 24c-2 5-6 8-11 8-7 0-12-6-12-13S11 6 18 6s13 6 12 14H12" stroke="#4fc3f1" strokeWidth="6" />
        <path d="M3 34C-2 26 14 5 27 2c6-1 6 4 4 9" stroke="#f5c525" strokeWidth="3" />
      </Drawing>
    ),
  },
  {
    name: 'Outlook',
    state: 'stack',
    icon: (
      <OfficeIcon letter="O" color="#0f70c8" dark="#0668b8">
        <path d="M20 10h15v16H20z" fill="#fff" />
        <path d="M21 11l6 7 8-8" stroke="#0f70c8" strokeWidth="2.500" />
      </OfficeIcon>
    ),
  },
  {
    name: 'Skype',
    state: 'open',
    icon: (
      <Drawing w={38} h={38}>
        <circle cx="11" cy="11" r="10" fill="#fff" />
        <circle cx="24" cy="24" r="10" fill="#fff" />
        <circle cx="17" cy="17" r="14" fill="#1cabe8" stroke="#fff" strokeWidth="2" />
        <text x="17" y="26" textAnchor="middle" fontFamily="Liberation Sans" fontSize="25" fontWeight="700" fill="#fff">S</text>
        <circle cx="29" cy="29" r="8" fill="#5da71c" stroke="#fff" strokeWidth="1.500" />
        <path d="M25 29l3 3 5-6" stroke="#fff" strokeWidth="2.500" />
      </Drawing>
    ),
  },
  {
    name: 'Excel',
    state: 'stack',
    icon: (
      <OfficeIcon letter="X" color="#1f7246" dark="#1f7246">
        <path d="M22 9h12M22 13h12M22 17h12M22 21h12M22 25h12M27 6v24M31 6v24" stroke="#1f7246" />
      </OfficeIcon>
    ),
  },
  {
    name: 'Notepad',
    state: 'stack',
    icon: (
      <Drawing w={36} h={36}>
        <path d="M26 4l9 4-3 26-6-1z" fill="#a6906c" />
        <path d="M14 2l18 2-5 30-25-6z" fill="url(#sky)" stroke="#dfe9ee" />
        <path d="M14 5l15 2-5 20-19-2z" fill="#5aa3b5" fillOpacity=".7" />
      </Drawing>
    ),
  },
  {
    name: 'Gerrit',
    state: 'open',
    icon: (
      <Drawing w={34} h={36}>
        <path d="M31 2l-1 7H14l-5 5v15h14v-6h-6l3-6h11v14l-5 4H6l-5-5V13l8-8h14z" fill="#d2312a" />
      </Drawing>
    ),
  },
  {
    name: 'Visual Studio Code',
    state: 'open',
    icon: (
      <Drawing w={36} h={38}>
        <path d="M25 1l10 4v28l-10 4L1 14l4-4 20 17V11L5 28l-4-4z" fill="#1b85cf" />
        <path d="M25 1l10 4v28l-10 4z" fill="#35aaf0" />
      </Drawing>
    ),
  },
  {
    name: 'Acrobat Reader',
    state: 'stack',
    icon: (
      <Drawing w={34} h={34}>
        <path d="M1 2h32v30H1z" fill="#2a0505" stroke="#e2231a" strokeWidth="2.500" />
        <path d="M8 25c6-2 11-11 9-17-2-3-4 1 0 7 3 5 9 9 10 6s-10-2-17 2" stroke="#f2e8e8" strokeWidth="2" />
      </Drawing>
    ),
  },
  {
    name: 'PuTTY',
    state: 'open',
    icon: (
      <Drawing w={36} h={36}>
        <path d="M18 2h13v11H18zM4 19h13v11H4z" fill="#1a1ae0" stroke="#d5d5d5" strokeWidth="2.500" />
        <path d="M16 15h18l-2 5H20zM1 31h20v4H1z" fill="#c4c4c4" />
        <path d="M23 9L9 21h8l-5 8 15-13h-8z" fill="#f5ec1a" stroke="#555" strokeWidth=".7" />
      </Drawing>
    ),
  },
  {
    name: 'WinSCP',
    state: 'open',
    icon: (
      <Drawing w={36} h={36}>
        <path d="M1 1h13l-4 4 5 4-5 5-5-4-4 3z" fill="#2f86e8" />
        <path d="M12 17v-6c0-9 14-9 14 0v6" stroke="#9b9b9b" strokeWidth="4" />
        <path d="M7 16h23v14H7z" fill="#6a6a6a" stroke="#8d8d8d" />
        <path d="M35 35H21l4-4-4-5 5-4 5 5 4-4z" fill="#25c125" />
      </Drawing>
    ),
  },
  {
    name: 'Word',
    state: 'stack',
    icon: (
      <OfficeIcon letter="W" color="#2a5699" dark="#2a5699">
        <path d="M22 9h11M22 13h11M22 17h11M22 21h11M22 25h11" stroke="#2a5699" strokeWidth="1.500" />
      </OfficeIcon>
    ),
  },
  {
    name: 'Chrome',
    state: 'open',
    icon: (
      <Drawing w={34} h={34}>
        <path d="M17 17L2.300 8.500A17 17 0 0 1 31.700 8.500z" fill="#e34133" />
        <path d="M17 17L31.700 8.500A17 17 0 0 1 17 34z" fill="#fccb3e" />
        <path d="M17 17v17A17 17 0 0 1 2.300 8.500z" fill="#2da14c" />
        <circle cx="17" cy="17" r="8" fill="#fff" />
        <circle cx="17" cy="17" r="6" fill="#4285f4" />
      </Drawing>
    ),
  },
  {
    name: 'DaVinci Developer',
    state: 'active',
    icon: (
      <Drawing w={36} h={36}>
        <ellipse cx="18" cy="18" rx="16" ry="17" fill="#d9b531" stroke="#4a3c08" strokeWidth="1.500" />
        <path d="M6 9c8 3 16 3 24 0M9 5l4 8M27 5l-4 8M18 1v12M5 30h26M12 26l-2 7M24 26l2 7" stroke="#5c4a0a" strokeWidth="1.500" />
        <path d="M0 13h36v14H0z" fill="#0d6b17" />
        <text x="18" y="24" textAnchor="middle" fontFamily="DejaVu Sans Condensed" fontSize="12" fontWeight="700" fill="#fff">DEV</text>
      </Drawing>
    ),
  },
]

function Taskbar() {
  return (
    <footer className="relative flex h-[62px] shrink-0 bg-[#1f1f1f] text-white">
      <button aria-label="Start" className="flex w-[73px] items-center justify-center">
        <Drawing w={26} h={26}>
          <path d="M0 4l11-2v10H0zM12 2l14-2v12H12zM0 13h11v11L0 22zM12 13h14v13l-14-2z" fill="#fff" />
        </Drawing>
      </button>
      <label className="mb-[2px] flex w-[521px] items-center gap-[16px] bg-[#f2f2f2] pl-[18px] font-['Noto_Sans_CJK_JP',sans-serif] text-[19px]">
        <Drawing w={26} h={26}>
          <circle cx="16" cy="9" r="8" stroke="#222" strokeWidth="2" />
          <path d="M10 15L1 25" stroke="#222" strokeWidth="2" />
        </Drawing>
        <input aria-label="Search" placeholder="ここに入力して検索" className="min-w-0 flex-1 outline-none placeholder:text-[#4a4a4a]" />
      </label>
      <button aria-label="Task view" className="flex w-[74px] items-center justify-center">
        <Drawing w={26} h={26}>
          <path d="M1 1v4h16V1M1 9h16v9H1zM1 26v-4h16v4M23 1v4M23 13v13" stroke="#eee" strokeWidth="2" />
          <path d="M21 7h5v5h-5z" fill="#fff" />
        </Drawing>
      </button>
      <div className="flex">
        {APPS.map((app) => (
          <button
            key={app.name}
            aria-label={app.name}
            className={clsx('flex w-[70px] flex-col items-center', app.state === 'active' && 'bg-[#4a4a4a]')}
          >
            <span className="flex flex-1 items-center">{app.icon}</span>
            <span className={clsx('flex h-[3px]', app.state === 'active' ? 'w-full' : 'w-14', app.state !== 'none' && 'bg-[#76b9ed]')}>
              {app.state === 'stack' && <span className="ml-auto w-3 bg-[#5a8db5]" />}
            </span>
          </button>
        ))}
      </div>
      <div className="ml-auto flex items-center">
        <button aria-label="Show hidden icons" className="mr-3">
          <Drawing w={20} h={12}><path d="M1 11l9-9 9 9" stroke="#fff" strokeWidth="2" /></Drawing>
        </button>
        <Drawing w={26} h={20}>
          <path d="M9 5h14v12H9M23 8h2v6h-2" stroke="#fff" strokeWidth="2" />
          <path d="M12 8h9v6h-9z" fill="#fff" />
          <path d="M2 0v4M7 0v4M1 4h8v5c-1 3-6 3-8 0zM5 11v5h5" stroke="#fff" strokeWidth="1.700" />
        </Drawing>
        <span className="ml-[14px]" />
        <Drawing w={22} h={22}>
          <path d="M2 21C2 9 9 2 20 2M7 21C7 12 12 7 20 7M12 21c0-5 3-9 8-9" stroke="#bbb" strokeWidth="2" />
          <circle cx="18" cy="19" r="2.500" fill="#fff" />
        </Drawing>
        <span className="ml-[10px]" />
        <Drawing w={24} h={20}>
          <path d="M1 7h4l5-5v16l-5-5H1zM13 7c2 2 2 4 0 6M16 4c4 4 4 8 0 12" stroke="#fff" strokeWidth="1.700" />
          <path d="M19 1c5 6 5 12 0 18" stroke="#777" strokeWidth="1.700" />
        </Drawing>
        <span className="ml-[10px] font-['Noto_Sans_CJK_SC',sans-serif] text-[24px] leading-8 font-medium">英</span>
        <span className="ml-[22px] flex h-[22px] w-[22px] items-center justify-center overflow-hidden bg-white font-['Noto_Sans_CJK_SC',sans-serif] text-[19px] leading-5 font-medium text-black">拼</span>
        <time className="ml-[26px] w-[88px] text-center font-['Open_Sans','Noto_Sans',sans-serif] text-[17px] leading-7">
          <span className="block">18:33</span>
          <span className="block">2019/11/07</span>
        </time>
        <button aria-label="Notifications" className="relative mr-[32px] ml-[26px]">
          <Drawing w={26} h={28}>
            <path d="M0 1h26v20h-7l-5 6v-6H0z" fill="#fff" />
            <path d="M4 6h18M4 11h18M4 16h12" stroke="#333" strokeWidth="2" />
          </Drawing>
          <span className="absolute top-[14px] left-[11px] flex h-7 w-7 items-center justify-center rounded-full border-2 border-[#8a8a8a] bg-[#333] text-[14px]">15</span>
        </button>
        <span className="h-full w-px bg-[#666]" />
        <span className="w-[6px]" />
      </div>
      <span className="absolute right-[16px] bottom-[5px] font-['Noto_Sans_CJK_SC',sans-serif] text-[18px] leading-7 font-light text-white/70">CSDN @旅之灵夫</span>
    </footer>
  )
}

export default function App() {
  return (
    <div className="flex h-screen flex-col overflow-hidden bg-[#f6f6f6] font-['DejaVu_Sans_Condensed','Noto_Sans',sans-serif]">
      <Gradients />
      <TitleBar />
      <RibbonTabs />
      <Ribbon />
      <main className="flex min-h-0 flex-1 bg-[#e9edf2] pr-1 pb-[3px] pl-1">
        <div className="flex min-w-0 flex-1 flex-col pt-[3px]">
          <DocTabs />
          <Editor />
          <ActionLog />
        </div>
        <PropertiesPanel />
      </main>
      <div className="flex h-[43px] shrink-0 items-center bg-[#1a4789] pl-[11px] text-[18px] text-[#eef2f8]">Design Mode</div>
      <Taskbar />
    </div>
  )
}
